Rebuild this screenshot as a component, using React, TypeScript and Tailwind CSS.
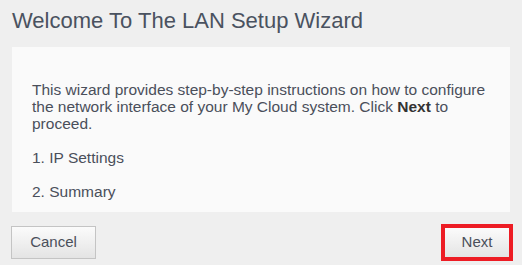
export default function App() {
  return (
    <div className="w-[522px] h-[265px] bg-[#efefef] overflow-hidden font-['Liberation_Sans',Arial,sans-serif] text-[#4a4f5a]">
      <h1 className="pl-3 pt-[8px] h-[47px] text-[22px] leading-[25px] text-[#4a5260]">
        Welcome To The LAN Setup Wizard
      </h1>
      <div className="mx-3 h-[165px] bg-[#fafafa] pl-5 pr-4 pt-[34px] text-[15.5px] leading-[17px]">
        <p>
          This wizard provides step-by-step instructions on how to configure the network interface of your My Cloud
          system. Click <b className="text-[#333]">Next</b> to proceed.
        </p>
        <p className="mt-[17px]">1. IP Settings</p>
        <p className="mt-[17px]">2. Summary</p>
      </div>
      <div className="flex items-center justify-between pl-[11px] pr-[9px] pt-[12px]">
        <button className="w-[85px] h-[33px] border border-[#c4c4c4] bg-gradient-to-b from-[#fbfbfb] to-[#e4e4e4] text-[15px] text-[#4a4f5a]">
          Cancel
        </button>
        <button className="w-[72px] h-[37px] border-4 border-[#ed1c24] bg-gradient-to-b from-[#fbfbfb] to-[#e4e4e4] text-[15px] text-[#4a4f5a]">
          Next
        </button>
      </div>
    </div>
  );
}
